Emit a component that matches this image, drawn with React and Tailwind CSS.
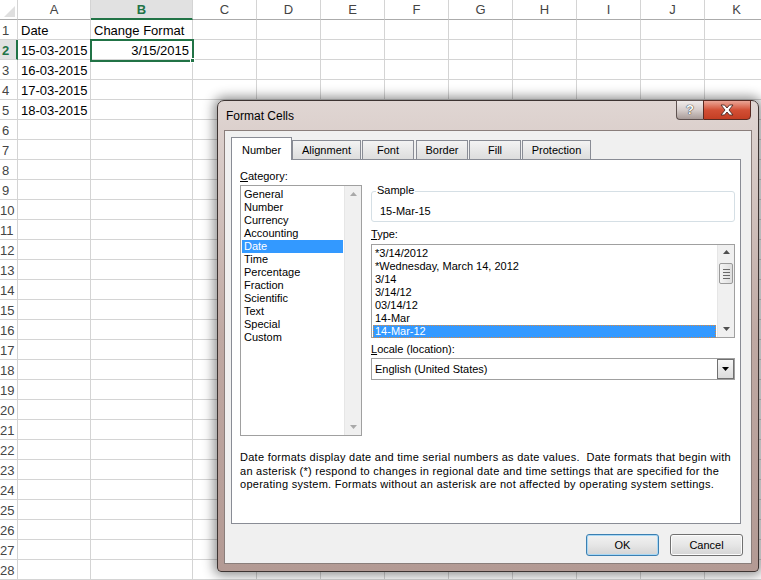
import React from "react";

const cols = [
  { id: "A", w: "w-[73px]" },
  { id: "B", w: "w-[102px]" },
  { id: "C", w: "w-[64px]" },
  { id: "D", w: "w-[64px]" },
  { id: "E", w: "w-[64px]" },
  { id: "F", w: "w-[64px]" },
  { id: "G", w: "w-[64px]" },
  { id: "H", w: "w-[64px]" },
  { id: "I", w: "w-[64px]" },
  { id: "J", w: "w-[64px]" },
  { id: "K", w: "w-[64px]" },
];

const cells = {
  1: { A: "Date", B: "Change Format" },
  2: { A: "15-03-2015", B: "3/15/2015" },
  3: { A: "16-03-2015" },
  4: { A: "17-03-2015" },
  5: { A: "18-03-2015" },
};

const rows = Array.from({ length: 29 }, (_, i) => i + 1);

const categories = [
  "General", "Number", "Currency", "Accounting", "Date", "Time",
  "Percentage", "Fraction", "Scientific", "Text", "Special", "Custom",
];

const types = [
  "*3/14/2012", "*Wednesday, March 14, 2012", "3/14", "3/14/12",
  "03/14/12", "14-Mar", "14-Mar-12",
];

const tabs = [
  { label: "Number", cls: "w-[61px]" },
  { label: "Alignment", cls: "w-[69px]" },
  { label: "Font", cls: "w-[52px] ml-px" },
  { label: "Border", cls: "w-[52px] ml-[2px]" },
  { label: "Fill", cls: "w-[52px] ml-px" },
  { label: "Protection", cls: "w-[69px] ml-px" },
];

const Arrow = ({ up, color }) => (
  <svg width="7" height="4" viewBox="0 0 7 4">
    <path d={up ? "M0 4 L3.5 0 L7 4 Z" : "M0 0 L3.5 4 L7 0 Z"} fill={color} />
  </svg>
);

const Sheet = () => (
  <div className="flex flex-col">
    {/* column headers */}
    <div className="flex h-[20px]">
      <div className="w-[18px] shrink-0 h-full border-r border-b border-r-[#d4d4d4] border-b-[#ababab] relative">
        <svg className="absolute right-[2px] bottom-[2px]" width="11" height="11" viewBox="0 0 11 11">
          <path d="M11 0 L11 11 L0 11 Z" fill="#dfdfdf" />
        </svg>
      </div>
      {cols.map((c) => (
        <div
          key={c.id}
          className={`${c.w} shrink-0 h-full border-r border-[#d4d4d4] flex items-center justify-center pt-px text-[13px] ${
            c.id === "B"
              ? "bg-[#e1e1e1] text-[#217346] font-bold border-b-2 border-b-[#217346]"
              : "text-[#444] border-b border-b-[#ababab]"
          }`}
        >
          {c.id}
        </div>
      ))}
    </div>
    {rows.map((n) => (
      <div key={n} className="flex h-[20px]">
        <div
          className={`w-[18px] shrink-0 h-full border-b border-[#d4d4d4] flex items-center pt-[3px] text-[13px] ${
            n === 2
              ? "bg-[#e1e1e1] text-[#217346] font-bold border-r-2 border-r-[#217346]"
              : "text-[#444] border-r"
          }`}
        >
          <span className="w-[11px] text-center">{n}</span>
        </div>
        {cols.map((c) => {
          const v = cells[n] && cells[n][c.id];
          const right = n === 2 && c.id === "B";
          return (
            <div
              key={c.id}
              className={`${c.w} shrink-0 h-full border-r border-b border-[#d4d4d4] flex items-center pt-[3px] px-[3px] text-[13px] text-black whitespace-nowrap ${
                right ? "justify-end" : ""
              }`}
            >
              {v}
            </div>
          );
        })}
      </div>
    ))}
  </div>
);

const Dialog = () => (
  <div className="absolute left-[217px] top-[100px] w-[542px] h-[472px] rounded-t-[7px] rounded-b-[4px] border border-[#3d3432] bg-gradient-to-b from-[#e0d6d3] via-[#bfa9a3] to-[#b39a94] shadow-[0_0_12px_3px_rgba(0,0,0,0.45)] flex flex-col px-[6px] pb-[7px]">
    {/* title bar */}
    <div className="relative h-[29px] shrink-0 flex items-center pl-[2px] text-[12px] text-black">
      Format Cells
      <div className="absolute -top-px right-px flex h-[20px]">
        <div className="w-[27px] h-full border border-[#5e5250] border-r-0 rounded-bl-[4px] bg-gradient-to-b from-[#f0ebea] via-[#d6cdcb] to-[#a99c99] flex items-center justify-center text-white font-bold text-[13px] [text-shadow:0_0_1px_#222,0_0_1px_#222]">
          ?
        </div>
        <div className="w-[48px] h-full border border-[#5a2a22] rounded-br-[4px] bg-gradient-to-b from-[#eaa596] via-[#d24f35] to-[#c43e23] flex items-center justify-center">
          <svg width="16" height="12" viewBox="0 0 16 12">
            <path
              d="M2 1 L5.5 1 L8 4 L10.5 1 L14 1 L10 6 L14 11 L10.5 11 L8 8 L5.5 11 L2 11 L6 6 Z"
              fill="#fff"
              stroke="#4a2a25"
              strokeWidth="0.9"
              strokeLinejoin="round"
            />
          </svg>
        </div>
      </div>
    </div>

    {/* body */}
    <div className="flex-1 border border-[#8a7e7b] bg-[#f0f0f0] flex flex-col text-[11px] text-black">
      {/* tabs */}
      <div className="h-[28px] shrink-0 flex items-end pl-[6px]">
        {tabs.map((t, i) =>
          i === 0 ? (
            <div
              key={t.label}
              className={`${t.cls} relative z-10 h-[23px] -mb-px pt-[3px] bg-white border border-b-0 border-[#898c95] flex items-center justify-center`}
            >
              {t.label}
            </div>
          ) : (
            <div
              key={t.label}
              className={`${t.cls} h-[19px] border border-b-0 border-[#898c95] bg-gradient-to-b from-[#f3f3f3] to-[#dddddd] flex items-center justify-center`}
            >
              {t.label}
            </div>
          )
        )}
      </div>

      {/* panel */}
      <div className="ml-[6px] w-[510px] h-[365px] shrink-0 bg-white border border-[#898c95] pl-[8px] flex flex-col">
        <div className="flex">
          {/* category */}
          <div className="w-[122px] flex flex-col">
            <div className="mt-[9px] h-[15px] leading-[15px]">
              <span className="underline">C</span>ategory:
            </div>
            <div className="mt-px h-[251px] border border-[#a0a0a0] flex">
              <div className="flex-1 pt-[2px] px-px">
                {categories.map((c) => (
                  <div
                    key={c}
                    className={`h-[13px] leading-[13px] pl-[2px] ${
                      c === "Date" ? "bg-[#3399ff] text-white" : ""
                    }`}
                  >
                    {c}
                  </div>
                ))}
              </div>
              <div className="w-[17px] shrink-0 h-full bg-[#f0f0f0] border-l border-[#e6e6e6] flex flex-col items-center justify-between py-[6px]">
                <Arrow up color="#a9a9a9" />
                <Arrow color="#a9a9a9" />
              </div>
            </div>
          </div>

          {/* right side */}
          <div className="ml-[9px] w-[364px] flex flex-col">
            <div className="relative mt-[31px] h-[31px] border border-[#d5dfe5] rounded-[3px] pl-[8px] pt-[13px] leading-[13px]">
              <span className="absolute -top-[8px] left-[4px] bg-white px-px leading-[13px]">Sample</span>
              15-Mar-15
            </div>
            <div className="mt-[6px] h-[13px] leading-[13px]">
              <span className="underline">T</span>ype:
            </div>
            <div className="mt-[3px] h-[94px] border border-[#a0a0a0] flex">
              <div className="flex-1 pt-[2px] px-px">
                {types.map((t) => (
                  <div
                    key={t}
                    className={`h-[13px] leading-[13px] pl-[2px] whitespace-nowrap ${
                      t === "14-Mar-12"
                        ? "bg-[#3399ff] text-white outline-1 outline-dotted outline-[#e08a3a] -outline-offset-1"
                        : ""
                    }`}
                  >
                    {t}
                  </div>
                ))}
              </div>
              <div className="w-[17px] shrink-0 h-full bg-[#f0f0f0] border-l border-[#e6e6e6] flex flex-col items-center pt-[5px] pb-[6px]">
                <Arrow up color="#505050" />
                <div className="mt-[9px] w-[14px] h-[21px] rounded-[2px] border border-[#9a9a9a] bg-gradient-to-r from-[#f4f4f4] to-[#dedede] flex flex-col items-center justify-center gap-[2px]">
                  <div className="w-[7px] h-px bg-[#6a6a6a]" />
                  <div className="w-[7px] h-px bg-[#6a6a6a]" />
                  <div className="w-[7px] h-px bg-[#6a6a6a]" />
                  <div className="w-[7px] h-px bg-[#6a6a6a]" />
                </div>
                <div className="flex-1" />
                <Arrow color="#505050" />
              </div>
            </div>
            <div className="mt-[4px] h-[14px] leading-[14px]">
              <span className="underline">L</span>ocale (location):
            </div>
            <div className="mt-[2px] h-[22px] border border-[#a0a0a0] flex items-center">
              <div className="flex-1 pl-[3px]">English (United States)</div>
              <div className="w-[17px] h-[20px] border border-[#707070] bg-gradient-to-b from-[#f6f6f6] to-[#dcdcdc] flex items-center justify-center">
                <Arrow color="#000" />
              </div>
            </div>
          </div>
        </div>

        <div className="mt-[15px] leading-[13.5px] tracking-[0.27px] whitespace-nowrap">
          Date formats display date and time serial numbers as date values.&nbsp; Date formats that begin with
          <br />
          an asterisk (*) respond to changes in regional date and time settings that are specified for the
          <br />
          operating system. Formats without an asterisk are not affected by operating system settings.
        </div>
      </div>

      {/* buttons */}
      <div className="mt-[10px] flex justify-end gap-[11px] pr-[8px]">
        <button className="w-[73px] h-[22px] rounded-[3px] border border-[#3c7fb1] shadow-[inset_0_0_0_1px_#a8d8f5] bg-gradient-to-b from-[#f2f2f2] via-[#e6e6e6] to-[#d4d4d4] text-[11px]">
          OK
        </button>
        <button className="w-[73px] h-[22px] rounded-[3px] border border-[#707070] shadow-[inset_0_0_0_1px_#fcfcfc] bg-gradient-to-b from-[#f2f2f2] via-[#e6e6e6] to-[#d4d4d4] text-[11px]">
          Cancel
        </button>
      </div>
    </div>
  </div>
);

export default function App() {
  return (
    <div className="relative w-[761px] h-[580px] overflow-hidden bg-white font-['Liberation_Sans',Arial,sans-serif]">
      <Sheet />
      {/* selected cell B2 */}
      <div className="absolute left-[90px] top-[39px] w-[104px] h-[23px] border-2 border-[#217346]" />
      <div className="absolute left-[190px] top-[58px] w-[5px] h-[5px] bg-[#217346] border border-white" />
      <Dialog />
    </div>
  );
}
